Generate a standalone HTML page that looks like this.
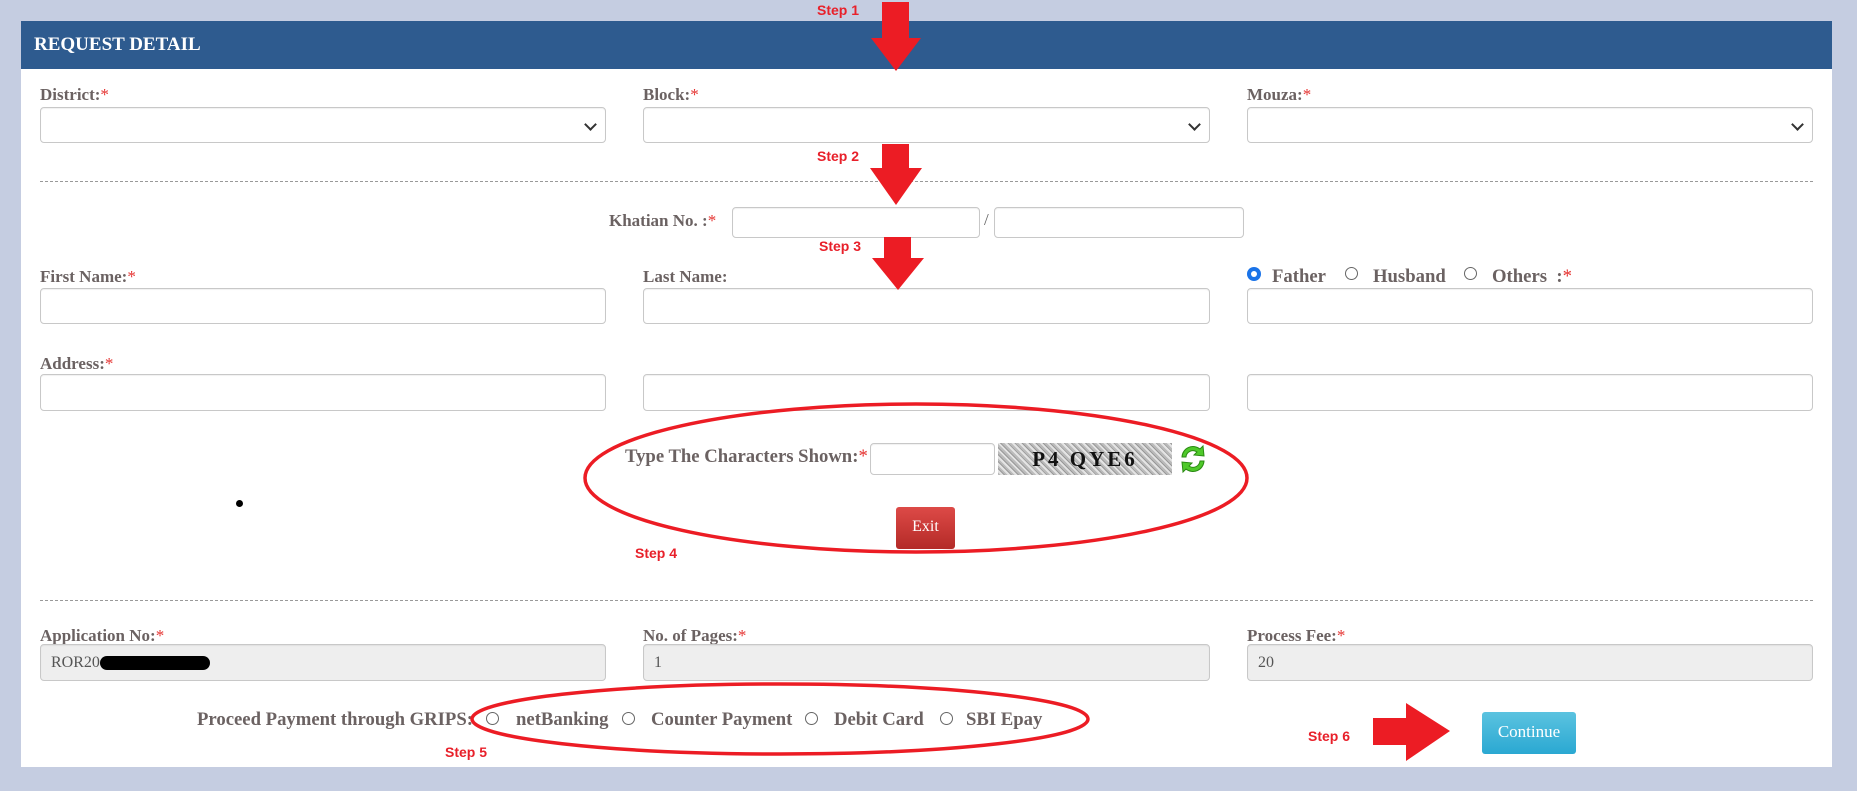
<!DOCTYPE html>
<html><head><meta charset="utf-8"><style>
body{margin:0;width:1857px;height:791px;background:#c5cde1;position:relative;overflow:hidden;font-family:"Liberation Serif",serif}
.a{position:absolute}
#panel{left:21px;top:21px;width:1811px;height:746px;background:#fff}
#hdr{left:21px;top:21px;width:1811px;height:48px;background:#2e5b8f;color:#fff;font-weight:bold;font-size:19px;line-height:48px;box-sizing:border-box;padding-left:13px}
.l{font-weight:bold;font-size:17px;color:#6b6262;white-space:nowrap}
.b{font-size:18.7px}
.l i{font-style:normal;color:#e5312f;font-weight:normal}
.in{border:1px solid #c8c8c8;border-radius:4px;background:#fff;box-sizing:border-box;box-shadow:inset 0 1px 1px rgba(0,0,0,.06)}
.g{background:#eee;color:#555;font-size:16px;line-height:35px;padding-left:10px}
.dash{border-top:1px dashed #999;height:0}
.st{font-family:"Liberation Sans",sans-serif;font-weight:bold;color:#e8202a;font-size:14px}
.r{width:13px;height:13px;border:1px solid #666;border-radius:50%;box-sizing:border-box;background:#fff}
.chev{position:absolute;right:10px;top:12px;width:7px;height:7px;border-right:2px solid #333;border-bottom:2px solid #333;transform:rotate(45deg)}
</style></head><body>
<div class="a" id="panel"></div>
<div class="a" id="hdr">REQUEST DETAIL</div>

<div class="a l" style="left:40px;top:85px">District:<i>*</i></div>
<div class="a l" style="left:643px;top:85px">Block:<i>*</i></div>
<div class="a l" style="left:1247px;top:85px">Mouza:<i>*</i></div>
<div class="a in" style="left:40px;top:107px;width:566px;height:36px"><span class="chev"></span></div>
<div class="a in" style="left:643px;top:107px;width:567px;height:36px"><span class="chev"></span></div>
<div class="a in" style="left:1247px;top:107px;width:566px;height:36px"><span class="chev"></span></div>

<div class="a dash" style="left:40px;top:181px;width:1773px"></div>

<div class="a l" style="left:609px;top:211px">Khatian No. :<i>*</i></div>
<div class="a in" style="left:732px;top:207px;width:248px;height:31px"></div>
<div class="a" style="left:984px;top:210px;color:#666;font-size:17px">/</div>
<div class="a in" style="left:994px;top:207px;width:250px;height:31px"></div>

<div class="a l" style="left:40px;top:267px">First Name:<i>*</i></div>
<div class="a l" style="left:643px;top:267px">Last Name:</div>
<div class="a" style="left:1247px;top:267px;width:14px;height:14px;border-radius:50%;background:#1a73e8"><div style="position:absolute;left:4px;top:4px;width:6px;height:6px;border-radius:50%;background:#fff"></div></div>
<div class="a l b" style="left:1272px;top:266px">Father</div>
<div class="a r" style="left:1345px;top:267px"></div>
<div class="a l b" style="left:1373px;top:266px">Husband</div>
<div class="a r" style="left:1464px;top:267px"></div>
<div class="a l b" style="left:1492px;top:266px">Others &nbsp;:<i>*</i></div>
<div class="a in" style="left:40px;top:288px;width:566px;height:36px"></div>
<div class="a in" style="left:643px;top:288px;width:567px;height:36px"></div>
<div class="a in" style="left:1247px;top:288px;width:566px;height:36px"></div>

<div class="a l" style="left:40px;top:354px">Address:<i>*</i></div>
<div class="a in" style="left:40px;top:374px;width:566px;height:37px"></div>
<div class="a in" style="left:643px;top:374px;width:567px;height:37px"></div>
<div class="a in" style="left:1247px;top:374px;width:566px;height:37px"></div>

<div class="a l b" style="left:625px;top:446px">Type The Characters Shown:<i>*</i></div>
<div class="a in" style="left:870px;top:443px;width:125px;height:32px"></div>
<div class="a" style="left:998px;top:443px;width:174px;height:32px;background:repeating-linear-gradient(45deg,#bbb 0 2px,#e4e4e4 2px 4px,#999 4px 5px);font-weight:bold;font-size:21px;letter-spacing:3px;line-height:32px;text-align:center;color:#111">P4 QYE6</div>
<svg class="a" style="left:1178px;top:443px" width="30" height="32" viewBox="0 0 30 32"><path d="M4 14 A11 11 0 0 1 22 6 L25 3 L26 13 L16 12 L19 9 A7 7 0 0 0 8 14Z" fill="#4fc92a" stroke="#2a8a12"/><path d="M26 18 A11 11 0 0 1 8 26 L5 29 L4 19 L14 20 L11 23 A7 7 0 0 0 22 18Z" fill="#4fc92a" stroke="#2a8a12"/></svg>
<div class="a" style="left:896px;top:507px;width:59px;height:42px;border-radius:3px;background:linear-gradient(#dd4a47,#b42a27);color:#fff;font-size:16px;line-height:40px;text-align:center">Exit</div>
<div class="a" style="left:236px;top:500px;width:7px;height:7px;border-radius:50%;background:#000"></div>

<div class="a dash" style="left:40px;top:600px;width:1773px"></div>

<div class="a l" style="left:40px;top:626px">Application No:<i>*</i></div>
<div class="a l" style="left:643px;top:626px">No. of Pages:<i>*</i></div>
<div class="a l" style="left:1247px;top:626px">Process Fee:<i>*</i></div>
<div class="a in g" style="left:40px;top:644px;width:566px;height:37px">ROR20<span style="display:inline-block;width:110px;height:14px;background:#000;border-radius:7px;vertical-align:middle"></span></div>
<div class="a in g" style="left:643px;top:644px;width:567px;height:37px">1</div>
<div class="a in g" style="left:1247px;top:644px;width:566px;height:37px">20</div>

<div class="a l b" style="left:197px;top:709px">Proceed Payment through GRIPS:</div>
<div class="a r" style="left:486px;top:712px"></div>
<div class="a l b" style="left:516px;top:709px">netBanking</div>
<div class="a r" style="left:622px;top:712px"></div>
<div class="a l b" style="left:651px;top:709px">Counter Payment</div>
<div class="a r" style="left:805px;top:712px"></div>
<div class="a l b" style="left:834px;top:709px">Debit Card</div>
<div class="a r" style="left:940px;top:712px"></div>
<div class="a l b" style="left:966px;top:709px">SBI Epay</div>
<div class="a" style="left:1482px;top:712px;width:94px;height:42px;border-radius:3px;background:linear-gradient(#5bc3e0,#2aa8d2);color:#fff;font-size:17px;line-height:40px;text-align:center">Continue</div>

<svg class="a" style="left:0;top:0" width="1857" height="791">
<g fill="#ec1c24">
<path d="M882 2h27v36h12l-25 33-25-33h11z"/>
<path d="M882 144h27v24h13l-26 37-26-37h12z"/>
<path d="M884 237h27v21h13l-26 32-26-32h12z"/>
<path d="M1373 718h33v-15l44 28-44 30v-16h-33z"/>
</g>
<g fill="none" stroke="#ec1c24" stroke-width="3.5">
<ellipse cx="916" cy="478" rx="331" ry="74"/>
<ellipse cx="780" cy="719" rx="308" ry="35"/>
</g>
</svg>
<div class="a st" style="left:817px;top:2px">Step 1</div>
<div class="a st" style="left:817px;top:148px">Step 2</div>
<div class="a st" style="left:819px;top:238px">Step 3</div>
<div class="a st" style="left:635px;top:545px">Step 4</div>
<div class="a st" style="left:445px;top:744px">Step 5</div>
<div class="a st" style="left:1308px;top:728px">Step 6</div>
</body></html>
